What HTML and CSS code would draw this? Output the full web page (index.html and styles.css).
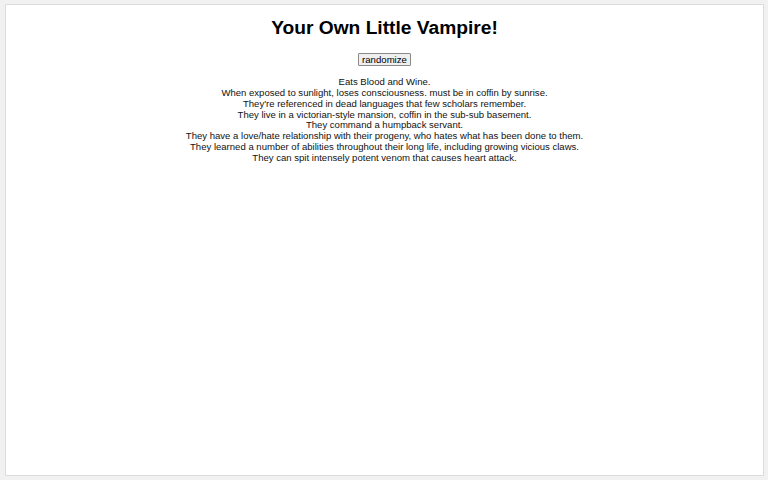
FILE: index.html
```html
<!DOCTYPE html>
<html lang="en">
<head>
	<meta charset="UTF-8">
	<title>Your Own Little Vampire!</title>
	<link rel="stylesheet" href="styles.css">
</head>
<body>
	<div class="page">
		<h1 class="title">Your Own Little Vampire!</h1>
		<button class="roll" type="button">randomize</button>
		<div class="traits">
			<div>Eats Blood and Wine.</div>
			<div>When exposed to sunlight, loses consciousness. must be in coffin by sunrise.</div>
			<div>They're referenced in dead languages that few scholars remember.</div>
			<div>They live in a victorian-style mansion, coffin in the sub-sub basement.</div>
			<div>They command a humpback servant.</div>
			<div>They have a love/hate relationship with their progeny, who hates what has been done to them.</div>
			<div>They learned a number of abilities throughout their long life, including growing vicious claws.</div>
			<div>They can spit intensely potent venom that causes heart attack.</div>
		</div>
	</div>
</body>
</html>
```

FILE: styles.css
```css
html, body {
	height: 100%;
}
body {
	margin: 0;
	padding: 4px 4px 4px 5px;
	box-sizing: border-box;
	background: #f1f1f1;
	font-family: "Liberation Sans", Arial, sans-serif;
	color: #000;
}
.page {
	height: 100%;
	box-sizing: border-box;
	background: #fff;
	border: 1px solid #dcdcdc;
	display: flex;
	flex-direction: column;
	align-items: center;
}
.title {
	margin: 11px 0 0;
	font-size: 19.2px;
	line-height: 24px;
	font-weight: bold;
}
.roll {
	margin-top: 13px;
	padding: 0 3.5px;
	height: 13px;
	font-family: "Liberation Sans", Arial, sans-serif;
	font-size: 9.6px;
	line-height: 11px;
	color: #000;
	background: #efefef;
	border: 1px solid #8a8a8a;
	border-radius: 1px;
}
.traits {
	margin-top: 11px;
	font-size: 9.55px;
	line-height: 10.86px;
	text-align: center;
	color: #111;
}
```
